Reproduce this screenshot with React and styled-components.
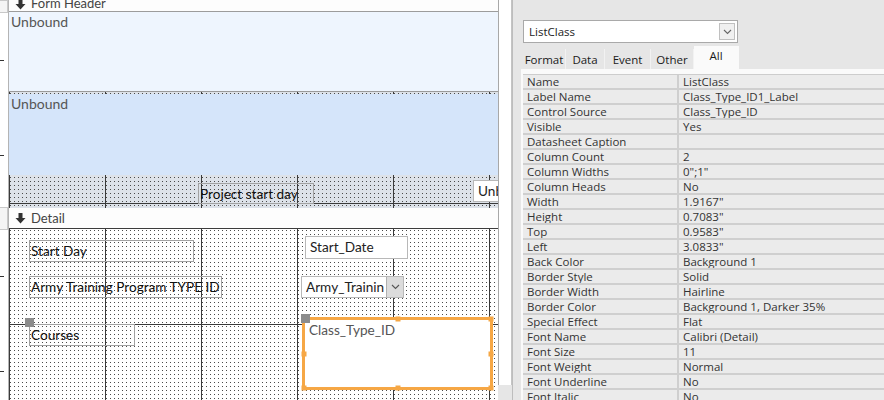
import React from 'react';
import styled, { createGlobalStyle, css } from 'styled-components';

const GlobalStyle = createGlobalStyle`
  html, body {
    margin: 0;
    padding: 0;
    overflow: hidden;
    background: #e6e6e6;
  }
`;

const Page = styled.div`
  display: flex;
  width: 884px;
  height: 400px;
  overflow: hidden;
  font-family: Lato, "Open Sans", sans-serif;
`;

const Ruler = styled.div`
  position: relative;
  width: 8px;
  flex: none;
  background: #fff;
  border-right: 1px solid #b4b4b4;
`;

const Tick = styled.div`
  position: absolute;
  left: 0;
  width: 4px;
  height: 1px;
  background: #333;
  top: ${p => p.top}px;
`;

const RulerBox = styled.div`
  position: absolute;
  left: 0;
  width: 7px;
  background: #f4f4f4;
  border: 1px solid #c8c8c8;
  border-left: none;
  top: ${p => p.top}px;
  height: ${p => p.h}px;
`;

const Designer = styled.div`
  width: 489px;
  flex: none;
  display: flex;
  flex-direction: column;
  background: #fff;
`;

const SectionBar = styled.div`
  display: flex;
  align-items: ${p => (p.cut ? 'flex-end' : 'center')};
  gap: 5px;
  padding-left: 6px;
  height: ${p => p.h}px;
  flex: none;
  background: #fdfdfd;
  border-bottom: 1px solid ${p => p.line};
  font-size: 13px;
  color: #444;
  overflow: hidden;
  box-sizing: border-box;
  span {
    line-height: 13px;
    ${p => p.cut && css`margin-bottom: 1px;`}
  }
  svg {
    ${p => p.cut && css`margin-bottom: 1px;`}
  }
`;

const gridBg = bg => css`
  background-color: ${bg};
  background-image:
    linear-gradient(to right, #3a3a3a 1px, transparent 1px),
    linear-gradient(to bottom, #3a3a3a 1px, transparent 1px),
    radial-gradient(circle at 1.5px 1.5px, #4a4a4a 0.7px, transparent 0.9px);
  background-size: 96px 96px, 96px 96px, 4px 4px;
  background-position: 96px 0, 0 95px, 0 0;
`;

const Section = styled.div`
  position: relative;
  height: ${p => p.h}px;
  flex: none;
  overflow: hidden;
  ${p => gridBg(p.bg)}
`;

const BigBox = styled.div`
  position: absolute;
  left: 0;
  right: 0;
  top: ${p => p.top}px;
  height: ${p => p.h}px;
  background: ${p => p.bg};
  border-bottom: 1px solid ${p => p.line || 'transparent'};
  box-sizing: border-box;
  padding: 1px 2px;
  font-size: 14px;
  color: #555;
`;

const Label = styled.div`
  position: absolute;
  left: ${p => p.x}px;
  top: ${p => p.y}px;
  width: ${p => p.w}px;
  height: ${p => p.h || 22}px;
  box-sizing: border-box;
  border: 1px solid #a2a2a2;
  font-size: 13.6px;
  line-height: 20px;
  color: #111;
  padding-left: 1px;
  white-space: nowrap;
  overflow: hidden;
`;

const TextBox = styled(Label)`
  background: #fff;
  border-color: #b8b8b8;
  color: #222;
  padding-left: 4px;
`;

const ComboBox = styled(TextBox)`
  display: flex;
  padding-right: 0;
  span {
    flex: 1;
    overflow: hidden;
  }
`;

const DropBtn = styled.div`
  width: 16px;
  flex: none;
  background: #dcdcdc;
  border-left: 1px solid #b0b0b0;
  display: flex;
  align-items: center;
  justify-content: center;
`;

const Handle = styled.div`
  position: absolute;
  left: ${p => p.x}px;
  top: ${p => p.y}px;
  width: 9px;
  height: 9px;
  background: #8c8c8c;
`;

const ListBox = styled.div`
  position: absolute;
  left: ${p => p.x}px;
  top: ${p => p.y}px;
  width: ${p => p.w}px;
  height: ${p => p.h}px;
  box-sizing: border-box;
  background: #fff;
  border: 3px solid #f6a745;
  padding: 0 4px;
  font-size: 13.6px;
  line-height: 20px;
  color: #555;
`;

const Dot = styled.div`
  position: absolute;
  width: 5px;
  height: 5px;
  background: #f6a745;
  left: ${p => p.x};
  top: ${p => p.y};
  transform: translate(-50%, -50%);
`;

const Scroll = styled.div`
  width: 14px;
  flex: none;
  display: flex;
  flex-direction: column;
`;

const Track = styled.div`
  height: 385px;
  background: #fff;
  border-left: 1px solid #a8a8a8;
  border-right: 1px solid #c4c4c4;
`;

const Sheet = styled.div`
  flex: 1;
  min-width: 0;
  overflow: hidden;
  background: #e6e6e6;
  border-left: 1px solid #bdbdbd;
  padding: 20px 0 0 10px;
  display: flex;
  flex-direction: column;
  font-family: "Open Sans", "Noto Sans", sans-serif;
  font-size: 11.5px;
  color: #333;
  & > * {
    flex-shrink: 0;
  }
`;

const Select = styled.div`
  width: 215px;
  height: 23px;
  box-sizing: border-box;
  background: #fff;
  border: 1px solid #a9a9a9;
  display: flex;
  align-items: center;
  justify-content: space-between;
  padding: 0 2px 0 5px;
  color: #222;
`;

const SelectBtn = styled.div`
  width: 16px;
  height: 17px;
  box-sizing: border-box;
  border: 1px solid #c0c0c0;
  background: #f0f0f0;
  display: flex;
  align-items: center;
  justify-content: center;
`;

const Tabs = styled.div`
  display: flex;
  align-items: flex-end;
  margin-top: 3px;
  height: 23px;
`;

const Tab = styled.div`
  width: ${p => p.w}px;
  height: ${p => (p.active ? 23 : 20)}px;
  box-sizing: border-box;
  display: flex;
  justify-content: center;
  align-items: ${p => (p.active ? 'flex-start' : 'center')};
  font-size: 11.5px;
  color: #1a1a1a;
  background: ${p => (p.active ? '#fafafa' : 'transparent')};
  border-right: 1px solid ${p => (p.active ? 'transparent' : '#f2f2f2')};
  padding-top: ${p => (p.active ? 2 : 0)}px;
`;

const Panel = styled.div`
  background: #fafafa;
  margin-left: -2px;
  padding: 5px 0 0 2px;
`;

const Grid = styled.div`
  display: grid;
  grid-template-columns: 156px 1fr;
  border-top: 1px solid #cdcdcd;
`;

const Cell = styled.div`
  height: 13px;
  line-height: 13px;
  background: #ebebeb;
  border-bottom: 2px solid #cfcfcf;
  padding-left: 4px;
  white-space: nowrap;
  overflow: hidden;
  ${p => !p.value && css`border-right: 2px solid #cfcfcf;`}
`;

const props = [
  ['Name', 'ListClass'],
  ['Label Name', 'Class_Type_ID1_Label'],
  ['Control Source', 'Class_Type_ID'],
  ['Visible', 'Yes'],
  ['Datasheet Caption', ''],
  ['Column Count', '2'],
  ['Column Widths', '0";1"'],
  ['Column Heads', 'No'],
  ['Width', '1.9167"'],
  ['Height', '0.7083"'],
  ['Top', '0.9583"'],
  ['Left', '3.0833"'],
  ['Back Color', 'Background 1'],
  ['Border Style', 'Solid'],
  ['Border Width', 'Hairline'],
  ['Border Color', 'Background 1, Darker 35%'],
  ['Special Effect', 'Flat'],
  ['Font Name', 'Calibri (Detail)'],
  ['Font Size', '11'],
  ['Font Weight', 'Normal'],
  ['Font Underline', 'No'],
  ['Font Italic', 'No'],
];

const SectionIcon = () => (
  <svg width="11" height="11" viewBox="0 0 11 11">
    <path d="M3.5 0h4v5h3L5.5 10.5 0.5 5h3z" fill="#333" />
  </svg>
);

const Chevron = ({ color = '#555' }) => (
  <svg width="9" height="6" viewBox="0 0 9 6">
    <path d="M1 1l3.5 3.5L8 1" fill="none" stroke={color} strokeWidth="1.1" />
  </svg>
);

const App = () => {
  return (
    <Page>
      <GlobalStyle />
      <Ruler>
        <RulerBox top={0} h={11} />
        <Tick top={60} />
        <Tick top={155} />
        <RulerBox top={207} h={21} />
        <Tick top={276} />
        <Tick top={371} />
      </Ruler>
      <Designer>
        <SectionBar h={12} cut line="#9c9c9c">
          <SectionIcon />
          <span>Form Header</span>
        </SectionBar>
        <Section h={196} bg="#dde2e9">
          <BigBox top={0} h={80} bg="#eef5fe" line="#9a9a9a">Unbound</BigBox>
          <BigBox top={82} h={81} bg="#d5e5fa">Unbound</BigBox>
          <Label x={189} y={171} w={116} h={21}>Project start day</Label>
          <TextBox x={464} y={168} w={40} h={22}>Unb</TextBox>
        </Section>
        <SectionBar h={21} line="#3c3c3c">
          <SectionIcon />
          <span>Detail</span>
        </SectionBar>
        <Section h={171} bg="#ffffff">
          <Label x={20} y={11} w={165}>Start Day</Label>
          <TextBox x={296} y={7} w={103} h={23}>Start_Date</TextBox>
          <Label x={20} y={47} w={193}>Army Training Program TYPE ID</Label>
          <ComboBox x={292} y={47} w={103} h={22}>
            <span>Army_Trainin</span>
            <DropBtn><Chevron /></DropBtn>
          </ComboBox>
          <Label x={20} y={95} w={106} h={22}>Courses</Label>
          <Handle x={16} y={89} />
          <ListBox x={293} y={88} w={191} h={73}>
            Class_Type_ID
            <Dot x="-1px" y="-1px" />
            <Dot x="50%" y="-1px" />
            <Dot x="calc(100% + 1px)" y="-1px" />
            <Dot x="-1px" y="50%" />
            <Dot x="calc(100% + 1px)" y="50%" />
            <Dot x="-1px" y="calc(100% + 1px)" />
            <Dot x="50%" y="calc(100% + 1px)" />
            <Dot x="calc(100% + 1px)" y="calc(100% + 1px)" />
          </ListBox>
          <Handle x={292} y={85} />
        </Section>
      </Designer>
      <Scroll>
        <Track />
      </Scroll>
      <Sheet>
        <Select>
          <span>ListClass</span>
          <SelectBtn><Chevron color="#666" /></SelectBtn>
        </Select>
        <Tabs>
          <Tab w={43}>Format</Tab>
          <Tab w={39}>Data</Tab>
          <Tab w={46}>Event</Tab>
          <Tab w={43}>Other</Tab>
          <Tab w={45} active>All</Tab>
        </Tabs>
        <Panel>
          <Grid>
            {props.map(([k, v]) => (
              <React.Fragment key={k}>
                <Cell>{k}</Cell>
                <Cell value>{v}</Cell>
              </React.Fragment>
            ))}
          </Grid>
        </Panel>
      </Sheet>
    </Page>
  );
};

export default App;
